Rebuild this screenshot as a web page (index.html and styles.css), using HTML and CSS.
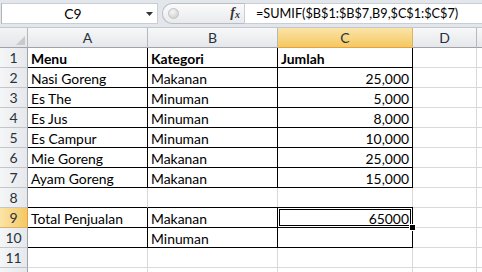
FILE: index.html
```html
<!DOCTYPE html>
<html>
<head>
<meta charset="utf-8">
<link rel="stylesheet" href="styles.css">
</head>
<body>
<div class="app">
  <div class="fbar">
    <div class="namebox">
      <span class="name">C9</span>
      <svg class="dd" width="7" height="4" viewBox="0 0 7 4"><path d="M0 0H7L3.5 4Z" fill="#333"/></svg>
    </div>
    <div class="ctrl">
      <span class="knob"></span>
      <span class="fx">f<sub>x</sub></span>
    </div>
    <div class="formula">=SUMIF($B$1:$B$7,B9,$C$1:$C$7)</div>
  </div>
  <div class="sheet">
    <div class="corner"><svg width="9" height="9" viewBox="0 0 9 9"><path d="M9 0V9H0Z" fill="#c9c9c9"/></svg></div>
    <div class="ch">A</div><div class="ch">B</div><div class="ch sel-h">C</div><div class="ch">D</div><div class="ch last"></div>

    <div class="rh">1</div><div class="c b bold">Menu</div><div class="c b bold">Kategori</div><div class="c b bold">Jumlah</div><div class="c"></div><div class="c"></div>
    <div class="rh">2</div><div class="c b">Nasi Goreng</div><div class="c b">Makanan</div><div class="c b n">25,000</div><div class="c"></div><div class="c"></div>
    <div class="rh">3</div><div class="c b">Es The</div><div class="c b">Minuman</div><div class="c b n">5,000</div><div class="c"></div><div class="c"></div>
    <div class="rh">4</div><div class="c b">Es Jus</div><div class="c b">Minuman</div><div class="c b n">8,000</div><div class="c"></div><div class="c"></div>
    <div class="rh">5</div><div class="c b">Es Campur</div><div class="c b">Minuman</div><div class="c b n">10,000</div><div class="c"></div><div class="c"></div>
    <div class="rh">6</div><div class="c b">Mie Goreng</div><div class="c b">Makanan</div><div class="c b n">25,000</div><div class="c"></div><div class="c"></div>
    <div class="rh">7</div><div class="c b">Ayam Goreng</div><div class="c b">Makanan</div><div class="c b n">15,000</div><div class="c"></div><div class="c"></div>
    <div class="rh">8</div><div class="c tb"></div><div class="c tb"></div><div class="c tb"></div><div class="c"></div><div class="c"></div>
    <div class="rh sel-r">9</div><div class="c b">Total Penjualan</div><div class="c b">Makanan</div><div class="c b n active">65000<span class="selection"><span class="handle"></span></span></div><div class="c"></div><div class="c"></div>
    <div class="rh">10</div><div class="c b"></div><div class="c b">Minuman</div><div class="c b"></div><div class="c"></div><div class="c"></div>
    <div class="rh">11</div><div class="c"></div><div class="c"></div><div class="c"></div><div class="c"></div><div class="c"></div>
    <div class="rh"></div><div class="c"></div><div class="c"></div><div class="c"></div><div class="c"></div><div class="c"></div>
  </div>
</div>
</body>
</html>
```

FILE: styles.css
```css
html, body {
  margin: 0;
  padding: 0;
  background: #ffffff;
}
.app {
  width: 482px;
  height: 272px;
  overflow: hidden;
  font-family: Lato, "Liberation Sans", sans-serif;
  font-size: 13.9px;
  color: #000;
}
.fbar {
  height: 28px;
  box-sizing: border-box;
  background: #e3e6ea;
  border-bottom: 1px solid #c3c7cc;
  display: flex;
  align-items: flex-start;
  padding-top: 3px;
}
.namebox {
  flex: 0 0 auto;
  width: 157px;
  height: 21px;
  box-sizing: border-box;
  margin-left: 1px;
  background: #fff;
  border: 1px solid #c9ced4;
  border-left-color: #b0b5bb;
  display: flex;
  align-items: center;
}
.name {
  flex: 1;
  text-align: center;
  padding-right: 2px;
  line-height: 19px;
}
.dd {
  margin-right: 4px;
}
.ctrl {
  flex: 0 0 auto;
  margin-left: 4px;
  width: 82px;
  height: 21px;
  box-sizing: border-box;
  border: 1px solid #b9bec5;
  border-right: none;
  border-radius: 10px 0 0 10px;
  background: linear-gradient(#fbfbfc, #e8eaed);
  display: flex;
  align-items: center;
  justify-content: space-between;
  padding-left: 5px;
}
.knob {
  width: 9px;
  height: 9px;
  border-radius: 50%;
  background: radial-gradient(circle at 40% 35%, #f6f6f6, #c8c8c8);
  border: 1px solid #c2c2c2;
}
.fx {
  font-family: "Liberation Serif", serif;
  font-style: italic;
  font-weight: bold;
  font-size: 14px;
  color: #333;
  padding-right: 4px;
  line-height: 19px;
}
.fx sub {
  font-size: 10px;
  vertical-align: -1px;
}
.formula {
  flex: 1 1 0;
  min-width: 0;
  overflow: hidden;
  height: 21px;
  box-sizing: border-box;
  background: #fff;
  border: 1px solid #c9ced4;
  border-right: none;
  padding-left: 11px;
  line-height: 19px;
  white-space: nowrap;
  font-size: 12.7px;
}
.sheet {
  display: grid;
  grid-template-columns: 28px 120px 130px 135px 64px 1fr;
  grid-template-rows: repeat(13, 20px);
}
.corner {
  background: linear-gradient(#f3f4f6, #e4e6e9);
  border-right: 1px solid #b5b8bd;
  border-bottom: 1px solid #9ea3a9;
  box-sizing: border-box;
  display: flex;
  align-items: flex-end;
  justify-content: flex-end;
  padding: 0 2px 2px 0;
}
.ch {
  background: linear-gradient(#f7f8f9, #e5e7ea);
  border-right: 1px solid #b5b8bd;
  border-bottom: 1px solid #9ea3a9;
  box-sizing: border-box;
  text-align: center;
  line-height: 19px;
  font-size: 14px;
  color: #27313c;
}
.ch.last {
  border-right: none;
}
.ch.sel-h {
  background: linear-gradient(#fbe4a8, #f5c862);
  border-bottom-color: #e4a23a;
  border-right-color: #d8b36a;
}
.rh {
  background: linear-gradient(90deg, #f5f6f8, #e6e8eb);
  border-right: 1px solid #9ea3a9;
  border-bottom: 1px solid #c2c5ca;
  box-sizing: border-box;
  text-align: center;
  line-height: 19px;
  font-size: 14px;
  color: #27313c;
}
.rh.sel-r {
  background: linear-gradient(90deg, #fbe4a8, #f5c862);
  border-right-color: #e4a23a;
  border-bottom-color: #d8b36a;
}
.c {
  border-right: 1px solid #d9d9d9;
  border-bottom: 1px solid #d9d9d9;
  box-sizing: border-box;
  padding: 0 3px 0 3px;
  line-height: 21px;
  white-space: nowrap;
  overflow: hidden;
}
.c.b {
  border-right-color: #000;
  border-bottom-color: #000;
}
.c.tb {
  border-bottom-color: #000;
}
.c.bold {
  font-weight: bold;
}
.c.n {
  text-align: right;
}
.c.active {
  position: relative;
  overflow: visible;
}
.selection {
  position: absolute;
  left: -1px;
  top: -1px;
  right: -1px;
  bottom: -1px;
  border: 1px solid #000;
  box-shadow: inset 0 0 0 1px #fff, inset 0 0 0 2px #000;
  pointer-events: none;
}
.handle {
  position: absolute;
  right: -4px;
  bottom: -4px;
  width: 5px;
  height: 5px;
  background: #000;
  border: 1px solid #fff;
}
```
